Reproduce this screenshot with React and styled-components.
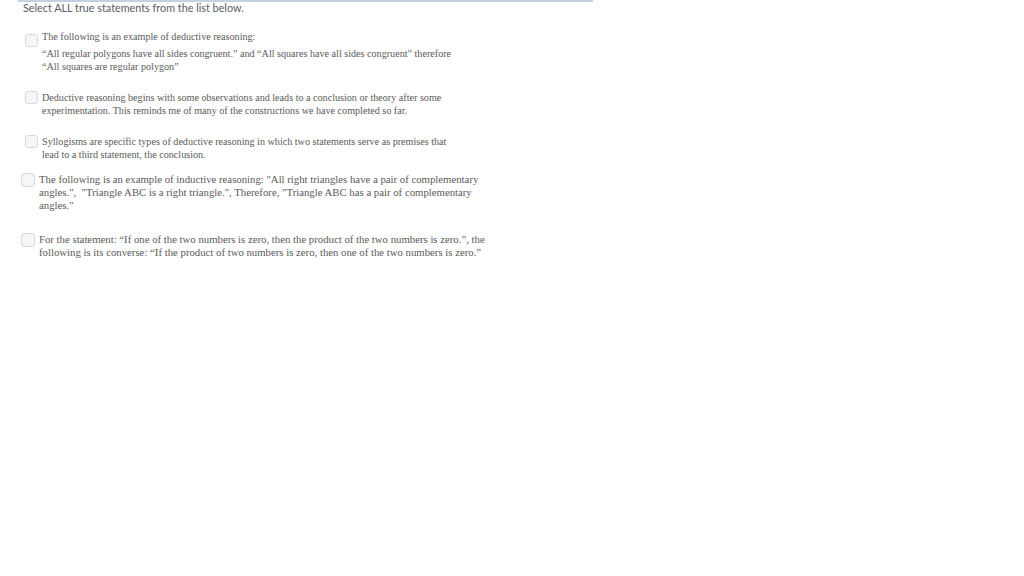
import React from "react";
import styled, { createGlobalStyle } from "styled-components";

const GlobalStyle = createGlobalStyle`
  body {
    margin: 0;
    background: #ffffff;
  }
`;

const options = [
  {
    id: 1,
    wide: false,
    drop: 4,
    gap: 16,
    lines: ["The following is an example of deductive reasoning:"],
    extra: [
      "“All regular polygons have all sides congruent.” and “All squares have all sides congruent” therefore",
      "“All squares are regular polygon”",
    ],
  },
  {
    id: 2,
    wide: false,
    gap: 18,
    lines: [
      "Deductive reasoning begins with some observations and leads to a conclusion or theory after some",
      "experimentation. This reminds me of many of the constructions we have completed so far.",
    ],
  },
  {
    id: 3,
    wide: false,
    gap: 18,
    lines: [
      "Syllogisms are specific types of deductive reasoning in which two statements serve as premises that",
      "lead to a third statement, the conclusion.",
    ],
  },
  {
    id: 4,
    wide: true,
    gap: 12,
    lines: [
      "The following is an example of inductive reasoning: \"All right triangles have a pair of complementary",
      "angles.\",  \"Triangle ABC is a right triangle.\", Therefore, \"Triangle ABC has a pair of complementary",
      "angles.\"",
    ],
  },
  {
    id: 5,
    wide: true,
    gap: 21,
    lines: [
      "For the statement: “If one of the two numbers is zero, then the product of the two numbers is zero.”, the",
      "following is its converse: “If the product of two numbers is zero, then one of the two numbers is zero.”",
    ],
  },
];

const App = () => {
  return (
    <>
      <GlobalStyle />
      <QuestionPanel>
        <Prompt>Select ALL true statements from the list below.</Prompt>
        <OptionList>
          {options.map((opt) => (
            <Option key={opt.id} $gap={opt.gap} $wide={opt.wide}>
              <Checkbox $drop={opt.drop || 0} $wide={opt.wide} />
              <OptionText $wide={opt.wide}>
                <Para>
                  {opt.lines.map((l, i) => (
                    <Line key={i}>{l}</Line>
                  ))}
                </Para>
                {opt.extra && (
                  <Para $spaced>
                    {opt.extra.map((l, i) => (
                      <Line key={i}>{l}</Line>
                    ))}
                  </Para>
                )}
              </OptionText>
            </Option>
          ))}
        </OptionList>
      </QuestionPanel>
    </>
  );
};

export default App;

const QuestionPanel = styled.div`
  width: 575px;
  margin-left: 18px;
  border-top: 2px solid #c6d1e0;
`;

const Prompt = styled.div`
  font-family: Lato, "Liberation Sans", sans-serif;
  font-size: 10.8px;
  line-height: 12px;
  color: #5a5e62;
  padding-left: 5px;
`;

const OptionList = styled.div`
  display: flex;
  flex-direction: column;
`;

const Option = styled.div`
  display: flex;
  align-items: flex-start;
  margin-top: ${(props) => props.$gap}px;
  padding-left: ${(props) => (props.$wide ? 3 : 7)}px;
`;

const Checkbox = styled.span`
  flex: none;
  box-sizing: border-box;
  width: ${(props) => (props.$wide ? 14 : 13)}px;
  height: ${(props) => (props.$wide ? 14 : 13)}px;
  margin-top: ${(props) => props.$drop}px;
  margin-right: 4px;
  border: 1px solid #d6dbe1;
  border-radius: 3px;
  background: #f4f6f8;
`;

const OptionText = styled.div`
  font-family: "Liberation Serif", "Times New Roman", serif;
  font-size: ${(props) => (props.$wide ? 10.75 : 10.15)}px;
  line-height: 13px;
  color: #5a5a5a;
`;

const Para = styled.div`
  margin-top: ${(props) => (props.$spaced ? 4 : 0)}px;
`;

const Line = styled.div`
  white-space: pre;
`;
